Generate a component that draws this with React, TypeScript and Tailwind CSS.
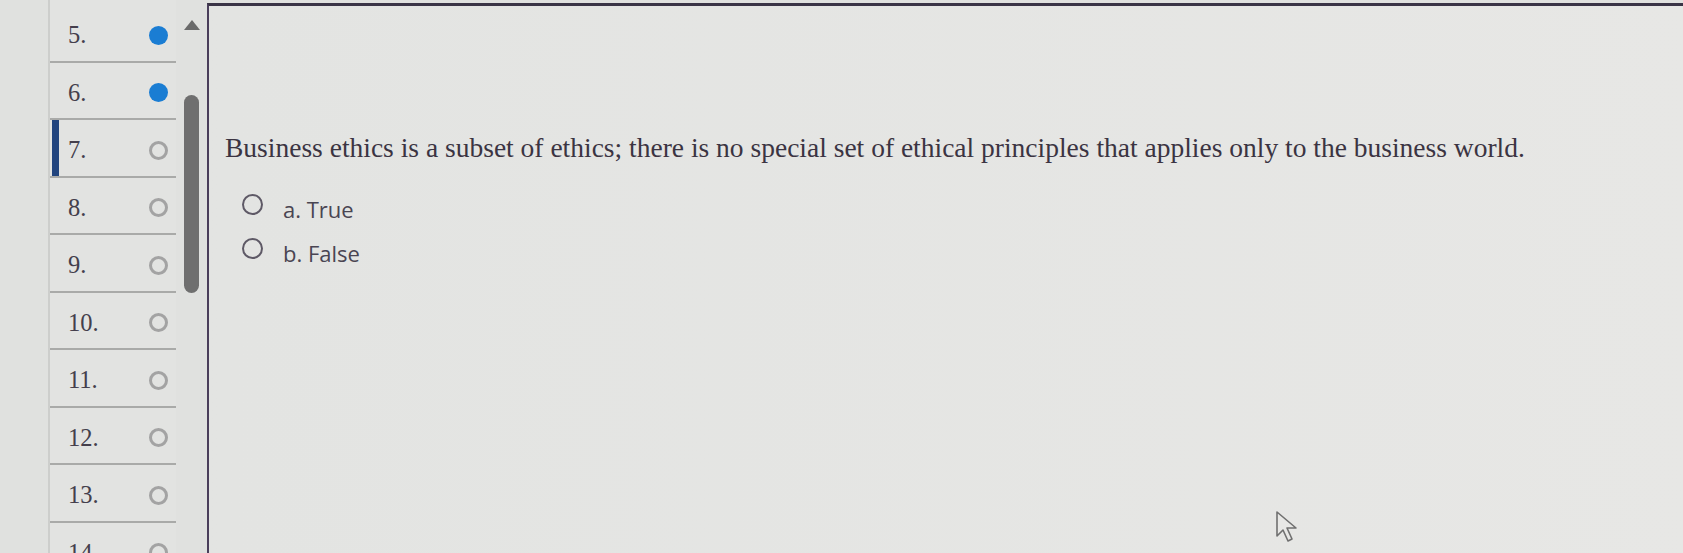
import React from "react";

type Item = { n: number; state: "done" | "active" | "empty" };

const items: Item[] = [
  { n: 5, state: "done" },
  { n: 6, state: "done" },
  { n: 7, state: "active" },
  { n: 8, state: "empty" },
  { n: 9, state: "empty" },
  { n: 10, state: "empty" },
  { n: 11, state: "empty" },
  { n: 12, state: "empty" },
  { n: 13, state: "empty" },
  { n: 14, state: "empty" },
];

function Row({ item }: { item: Item }) {
  return (
    <div className="relative h-[57.5px] border-b-2 border-[#a9aaa8] flex items-center justify-between pl-[18px] pr-[8px] pt-[5px]">
      {item.state === "active" && (
        <div className="absolute left-[2px] top-0 bottom-0 w-[7px] bg-[#21447e]" />
      )}
      <span className="text-[24.5px] leading-none text-[#443f4c]" style={{ fontFamily: '"Liberation Serif", "Times New Roman", serif' }}>
        {item.n}.
      </span>
      {item.state === "done" ? (
        <span className="block w-[19px] h-[19px] rounded-full bg-[#1a7dd3]" />
      ) : (
        <span className="block w-[19px] h-[19px] rounded-full border-[3px] border-[#a3a3a3]" />
      )}
    </div>
  );
}

function Option({ label }: { label: string }) {
  return (
    <div className="h-[44px] flex items-center pl-[17px]">
      <span className="block w-[21px] h-[21px] rounded-full border-2 border-[#5e5966] mr-[20px] mb-[5px]" />
      <span className="text-[22px] leading-[30px] text-[#4a4552] pt-[4px]" style={{ fontFamily: '"Open Sans", "Noto Sans", sans-serif' }}>
        {label}
      </span>
    </div>
  );
}

export default function App() {
  return (
    <div className="relative w-[1683px] h-[553px] overflow-hidden flex bg-[#e0e1df]">
      <div className="w-[48px] shrink-0" />
      <div className="w-[128px] shrink-0 border-l-2 border-[#cdcecc] pt-[5px] bg-[#e2e3e1]">
        {items.map((it) => (
          <Row key={it.n} item={it} />
        ))}
      </div>
      <div className="w-[31px] shrink-0 flex flex-col items-center pt-[20px]">
        <div className="w-0 h-0 border-l-[8px] border-r-[8px] border-b-[10px] border-l-transparent border-r-transparent border-b-[#6a6a6a]" />
        <div className="mt-[65px] w-[15px] h-[198px] rounded-full bg-[#6f6f6f]" />
      </div>
      <div className="flex-1 mt-[3px] border-l-2 border-t-[3px] border-l-[#4a3e5b] border-t-[#3a3446] bg-gradient-to-r from-[#e3e4e2] to-[#e7e7e5] pl-[16px] pt-[126px]">
        <p className="text-[27.5px] leading-[32px] text-[#3b3442] whitespace-nowrap" style={{ fontFamily: '"Liberation Serif", "Times New Roman", serif' }}>
          Business ethics is a subset of ethics; there is no special set of ethical principles that applies only to the business world.
        </p>
        <div className="mt-[21px]">
          <Option label="a. True" />
          <Option label="b. False" />
        </div>
      </div>
      <svg className="absolute left-[1275px] top-[510px]" width="26" height="36" viewBox="0 0 26 36">
        <path d="M2 2 L2 26 L8 20 L13 31 L17 29 L12 18 L21 18 Z" fill="#e8e8e6" stroke="#707070" strokeWidth="1.6" strokeLinejoin="round" />
      </svg>
    </div>
  );
}
